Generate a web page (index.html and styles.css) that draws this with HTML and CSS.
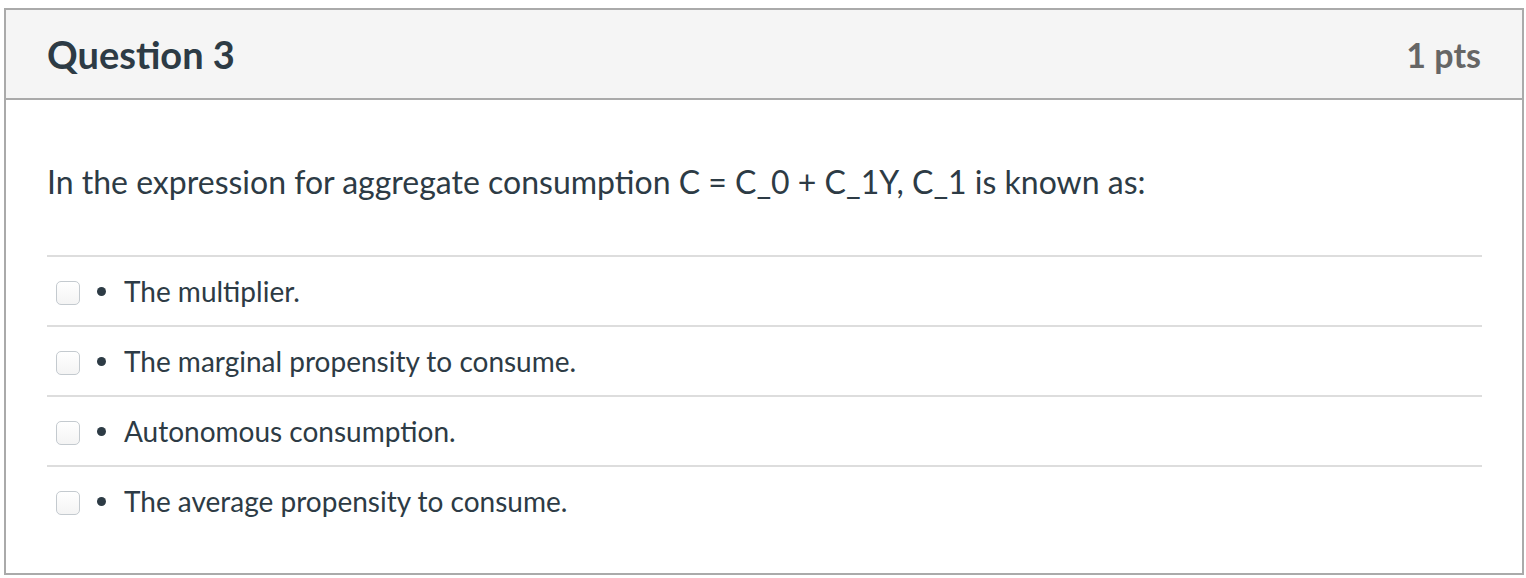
FILE: index.html
```html
<!DOCTYPE html>
<html>
<head>
<meta charset="utf-8">
<link rel="stylesheet" href="styles.css">
</head>
<body>
<div class="question">
  <div class="header">
    <h2 class="title">Question 3</h2>
    <div class="pts">1 pts</div>
  </div>
  <div class="content">
    <p class="text">In the expression for aggregate consumption C = C_0 + C_1Y, C_1 is known as:</p>
    <div class="answers">
      <div class="answer"><span class="box"></span><span class="bullet"></span><span class="label">The multiplier.</span></div>
      <div class="answer"><span class="box"></span><span class="bullet"></span><span class="label">The marginal propensity to consume.</span></div>
      <div class="answer"><span class="box"></span><span class="bullet"></span><span class="label">Autonomous consumption.</span></div>
      <div class="answer"><span class="box"></span><span class="bullet"></span><span class="label">The average propensity to consume.</span></div>
    </div>
  </div>
</div>
</body>
</html>
```
FILE: styles.css
```css
html, body { margin: 0; padding: 0; background: #fff; }
body {
  padding: 8px 2px 3px 4px;
  font-family: Lato, "Open Sans", sans-serif;
  color: #2d3b45;
}
.question {
  border: 2px solid #aaaaaa;
  height: 567px;
  box-sizing: border-box;
  display: flex;
  flex-direction: column;
}
.header {
  height: 90px;
  box-sizing: border-box;
  background: #f5f5f5;
  border-bottom: 2px solid #aaaaaa;
  display: flex;
  align-items: center;
  justify-content: space-between;
  padding: 0 41px 0 41px;
}
.title {
  margin: 0;
  font-size: 38px;
  font-weight: 700;
  color: #2d3b45;
}
.pts {
  font-size: 34px;
  font-weight: 700;
  color: #666666;
}
.content {
  padding: 0 40px 0 41px;
}
.text {
  margin: 62px 0 0 0;
  font-size: 32px;
  line-height: 40px;
}
.answers {
  margin-top: 53px;
}
.answer {
  border-top: 2px solid #dddddd;
  height: 70px;
  box-sizing: border-box;
  display: flex;
  align-items: center;
  padding-left: 9px;
}
.box {
  width: 24px;
  height: 24px;
  box-sizing: border-box;
  border: 1px solid #c4cacf;
  border-radius: 5px;
  background: linear-gradient(#ffffff, #f4f4f4);
  flex: none;
  margin-top: 3px;
}
.bullet {
  width: 9px;
  height: 9px;
  border-radius: 50%;
  background: #2d3b45;
  margin-left: 17px;
  margin-right: 18px;
  flex: none;
}
.label {
  font-size: 28px;
}
```
